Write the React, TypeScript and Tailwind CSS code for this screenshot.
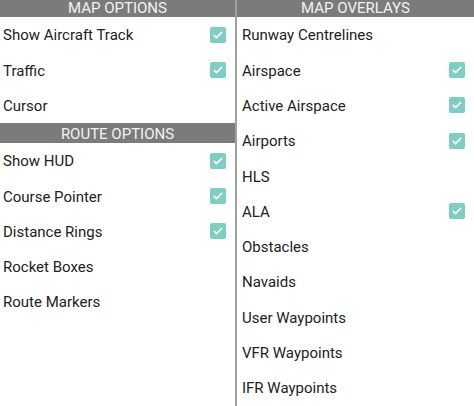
const mapOptions = [
  { label: "Show Aircraft Track", on: true },
  { label: "Traffic", on: true },
  { label: "Cursor", on: false },
];

const routeOptions = [
  { label: "Show HUD", on: true },
  { label: "Course Pointer", on: true },
  { label: "Distance Rings", on: true },
  { label: "Rocket Boxes", on: false },
  { label: "Route Markers", on: false },
];

const overlays = [
  { label: "Runway Centrelines", on: false },
  { label: "Airspace", on: true },
  { label: "Active Airspace", on: true },
  { label: "Airports", on: true },
  { label: "HLS", on: false },
  { label: "ALA", on: true },
  { label: "Obstacles", on: false },
  { label: "Navaids", on: false },
  { label: "User Waypoints", on: false },
  { label: "VFR Waypoints", on: false },
  { label: "IFR Waypoints", on: false },
];

function Check() {
  return (
    <span className="flex h-4 w-4 items-center justify-center rounded-[2px] bg-[#7fcdc3]">
      <svg viewBox="0 0 16 16" className="h-3 w-3" fill="none" stroke="white" strokeWidth="2" strokeLinecap="round" strokeLinejoin="round">
        <path d="M3 8.5l3 3 7-7" />
      </svg>
    </span>
  );
}

function Header({ title, tall }: { title: string; tall?: boolean }) {
  return (
    <div
      className={`${
        tall ? "h-[20px] pt-[1px]" : "h-[17px]"
      } flex items-end justify-center overflow-hidden bg-[#7b7b7b] text-[15px] leading-[18px] text-[#f2f2f2]`}
    >
      {title}
    </div>
  );
}

function Row({ label, on, pl }: { label: string; on: boolean; pl: string }) {
  return (
    <div className={`${pl} flex h-[35.3px] items-center justify-between pr-[9px] text-[15px] text-[#222]`}>
      <span className="pt-[2px]">{label}</span>
      {on && <Check />}
    </div>
  );
}

export default function App() {
  return (
    <div
      className="flex h-[406px] w-[474px] overflow-hidden bg-white"
      style={{ fontFamily: "Roboto, 'Liberation Sans', sans-serif" }}
    >
      {/* Left column */}
      <div className="w-[235px] flex-shrink-0">
        <Header title="MAP OPTIONS" />
        {mapOptions.map((o) => (
          <Row key={o.label} {...o} pl="pl-[3px]" />
        ))}
        <Header title="ROUTE OPTIONS" tall />
        {routeOptions.map((o) => (
          <Row key={o.label} {...o} pl="pl-[3px]" />
        ))}
      </div>

      <div className="w-[2px] flex-shrink-0 bg-[#a0a0a0]" />

      {/* Right column */}
      <div className="flex-1">
        <Header title="MAP OVERLAYS" />
        {overlays.map((o) => (
          <Row key={o.label} {...o} pl="pl-[5px]" />
        ))}
      </div>
    </div>
  );
}
